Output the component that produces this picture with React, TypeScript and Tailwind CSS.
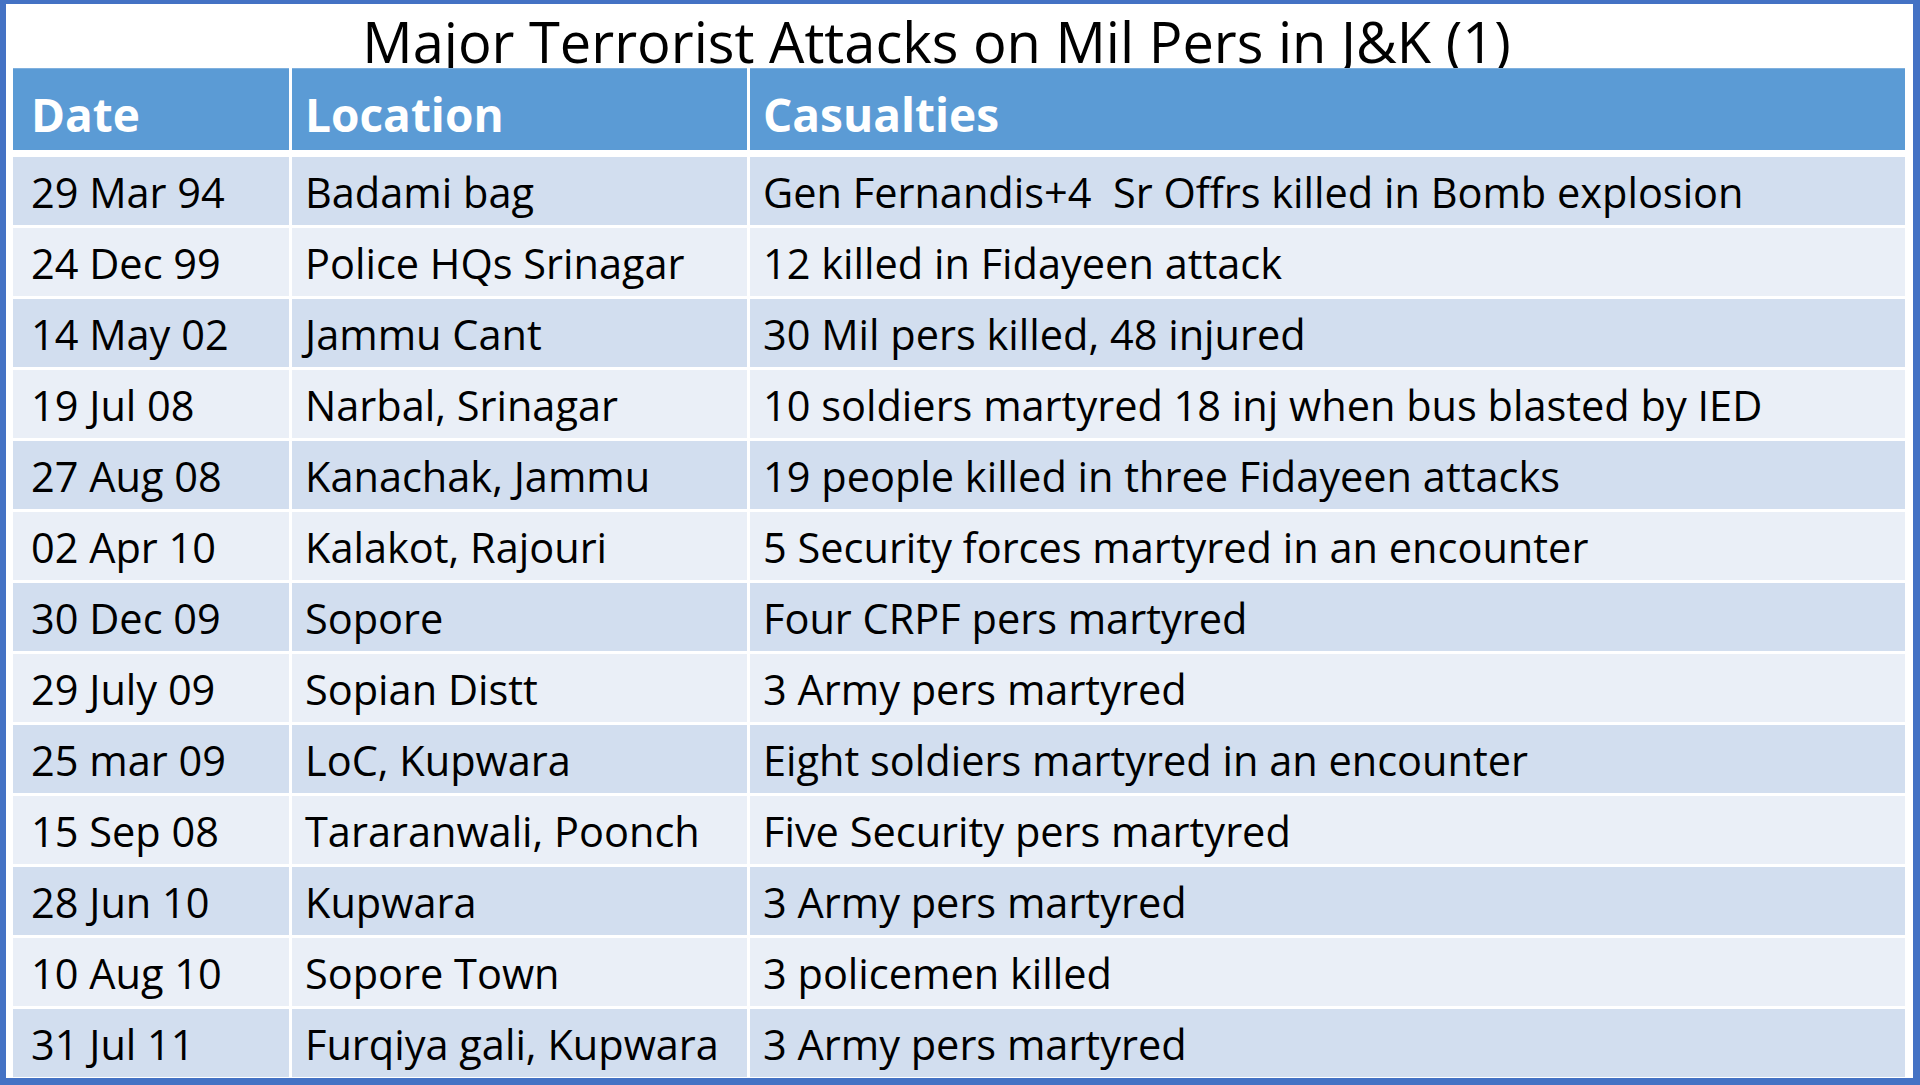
const rows: [string, string, string][] = [
  ["29 Mar 94", "Badami bag", "Gen Fernandis+4  Sr Offrs killed in Bomb explosion"],
  ["24 Dec 99", "Police HQs Srinagar", "12 killed in Fidayeen attack"],
  ["14 May 02", "Jammu Cant", "30 Mil pers killed, 48 injured"],
  ["19 Jul 08", "Narbal, Srinagar", "10 soldiers martyred 18 inj when bus blasted by IED"],
  ["27 Aug 08", "Kanachak, Jammu", "19 people killed in three Fidayeen attacks"],
  ["02 Apr 10", "Kalakot, Rajouri", "5 Security forces martyred in an encounter"],
  ["30 Dec 09", "Sopore", "Four CRPF pers martyred"],
  ["29 July 09", "Sopian Distt", "3 Army pers martyred"],
  ["25 mar 09", "LoC, Kupwara", "Eight soldiers martyred in an encounter"],
  ["15 Sep 08", "Tararanwali, Poonch", "Five Security pers martyred"],
  ["28 Jun 10", "Kupwara", "3 Army pers martyred"],
  ["10 Aug 10", "Sopore Town", "3 policemen killed"],
  ["31 Jul 11", "Furqiya gali, Kupwara", "3 Army pers martyred"],
];

export default function App() {
  return (
    <div className="w-[1920px] h-[1085px] overflow-hidden bg-white border-[#4472c4] border-t-[4px] border-l-[6px] border-r-[7px] border-b-[7px] font-['Open_Sans','Liberation_Sans',sans-serif] text-black">
      <div className="h-[64px] pt-[9px] pr-[46px] text-center text-[56px] leading-none whitespace-nowrap">
        Major Terrorist Attacks on Mil Pers in J&amp;K (1)
      </div>

      <div className="ml-[7px] mr-[8px] grid grid-cols-[276px_455px_1155px] gap-x-[3px]">
        {/* header */}
        {["Date", "Location", "Casualties"].map((h, i) => (
          <div
            key={h}
            className={`h-[82px] mb-[7px] bg-[#5b9bd5] border-t border-[#7fb0de] flex items-center pt-[8px] text-white font-bold text-[46px] leading-none ${
              i === 0 ? "pl-[18px]" : "pl-[13px]"
            }`}
          >
            {h}
          </div>
        ))}
      </div>

      <div className="ml-[7px] mr-[8px] flex flex-col gap-y-[3px]">
        {rows.map((r, idx) => (
          <div key={idx} className="grid grid-cols-[276px_455px_1155px] gap-x-[3px]">
            {r.map((c, i) => (
              <div
                key={i}
                className={`h-[68px] flex items-center pt-[4px] text-[41.5px] leading-none whitespace-pre ${
                  idx % 2 === 0 ? "bg-[#d2deef]" : "bg-[#eaeff7]"
                } ${i === 0 ? "pl-[18px]" : "pl-[13px]"}`}
              >
                {c}
              </div>
            ))}
          </div>
        ))}
      </div>
    </div>
  );
}
